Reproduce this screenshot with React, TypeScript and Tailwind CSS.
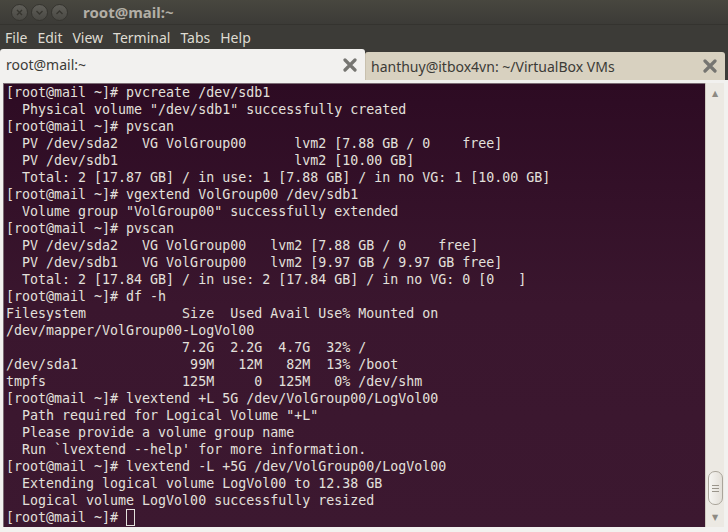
import { FunctionalComponent } from "react";

const lines: string[] = [
  "[root@mail ~]# pvcreate /dev/sdb1",
  "  Physical volume \"/dev/sdb1\" successfully created",
  "[root@mail ~]# pvscan",
  "  PV /dev/sda2   VG VolGroup00      lvm2 [7.88 GB / 0    free]",
  "  PV /dev/sdb1                      lvm2 [10.00 GB]",
  "  Total: 2 [17.87 GB] / in use: 1 [7.88 GB] / in no VG: 1 [10.00 GB]",
  "[root@mail ~]# vgextend VolGroup00 /dev/sdb1",
  "  Volume group \"VolGroup00\" successfully extended",
  "[root@mail ~]# pvscan",
  "  PV /dev/sda2   VG VolGroup00   lvm2 [7.88 GB / 0    free]",
  "  PV /dev/sdb1   VG VolGroup00   lvm2 [9.97 GB / 9.97 GB free]",
  "  Total: 2 [17.84 GB] / in use: 2 [17.84 GB] / in no VG: 0 [0   ]",
  "[root@mail ~]# df -h",
  "Filesystem            Size  Used Avail Use% Mounted on",
  "/dev/mapper/VolGroup00-LogVol00",
  "                      7.2G  2.2G  4.7G  32% /",
  "/dev/sda1              99M   12M   82M  13% /boot",
  "tmpfs                 125M     0  125M   0% /dev/shm",
  "[root@mail ~]# lvextend +L 5G /dev/VolGroup00/LogVol00",
  "  Path required for Logical Volume \"+L\"",
  "  Please provide a volume group name",
  "  Run `lvextend --help' for more information.",
  "[root@mail ~]# lvextend -L +5G /dev/VolGroup00/LogVol00",
  "  Extending logical volume LogVol00 to 12.38 GB",
  "  Logical volume LogVol00 successfully resized",
];

const CloseX = () => (
  <svg width="14" height="14" viewBox="0 0 14 14">
    <path d="M2 2 L12 12 M12 2 L2 12" stroke="#767571" strokeWidth="3.2" strokeLinecap="round" />
  </svg>
);

const WinButton = ({ kind }: { kind: string }) => (
  <div className="w-[17px] h-[17px] rounded-full bg-gradient-to-b from-[#5f5e58] to-[#4a4944] border border-[#35342f] flex items-center justify-center">
    <svg width="9" height="9" viewBox="0 0 9 9">
      {kind === "close" && <path d="M2 2 L7 7 M7 2 L2 7" stroke="#36352f" strokeWidth="1.4" />}
      {kind === "min" && <path d="M1.5 3 L4.5 6 L7.5 3" stroke="#36352f" strokeWidth="1.4" fill="none" />}
      {kind === "max" && <path d="M1.5 6 L4.5 3 L7.5 6" stroke="#36352f" strokeWidth="1.4" fill="none" />}
    </svg>
  </div>
);

const App: FunctionalComponent = () => {
  return (
    <div className="w-[728px] h-[532px] bg-[#3c3b37] flex flex-col overflow-hidden" style={{ fontFamily: '"Noto Sans", "DejaVu Sans", sans-serif' }}>
      {/* title bar */}
      <div className="h-[25px] flex items-center bg-gradient-to-b from-[#48473f] to-[#3c3b37] border-b border-[#34332f]">
        <div className="flex gap-[3px] pl-[11px]">
          <WinButton kind="close" />
          <WinButton kind="min" />
          <WinButton kind="max" />
        </div>
        <div className="ml-[15px] text-[15px] font-bold text-[#b2aea5] leading-none">root@mail:~</div>
      </div>

      {/* menu bar */}
      <div className="h-[24px] flex items-center pl-[5px] gap-[10px] text-[14px] text-[#dfdbd2]">
        <span>File</span>
        <span>Edit</span>
        <span>View</span>
        <span>Terminal</span>
        <span>Tabs</span>
        <span>Help</span>
      </div>

      {/* tabs */}
      <div className="h-[31px] flex items-end">
        <div className="w-[365px] h-[31px] bg-[#f2f1ef] rounded-t-[3px] flex items-center justify-between pl-[6px] pr-[8px] text-[14px] text-[#3c3b37]">
          <span>root@mail:~</span>
          <CloseX />
        </div>
        <div className="w-[360px] h-[28px] bg-[#d8d1c0] rounded-t-[3px] flex items-center justify-between pl-[5px] pr-[8px] text-[14px] text-[#3c3b37] border-l border-[#c8c0ae]">
          <span>hanthuy@itbox4vn: ~/VirtualBox VMs</span>
          <CloseX />
        </div>
      </div>

      {/* terminal frame */}
      <div className="flex-1 bg-[#f2f1ef] pl-[3px] pt-[3px] pb-[5px] pr-[4px] flex">
        <div className="flex-1 bg-gradient-to-b from-[#2d0b23] via-[#3a162e] to-[#3c1830] pl-[2px] overflow-hidden border-l border-t border-[#7b6c74]">
          <pre className="text-[13.3px] leading-[17px] text-[#e3e0dc] m-0" style={{ fontFamily: '"DejaVu Sans Mono", monospace' }}>
            {lines.map((l, i) => (
              <div key={i} className="h-[17px] whitespace-pre">{l}</div>
            ))}
            <div className="h-[17px] whitespace-pre flex items-center">
              <span>[root@mail ~]# </span>
              <span className="inline-block w-[9px] h-[17px] border border-[#e3e0dc]" />
            </div>
          </pre>
        </div>
        {/* scrollbar */}
        <div className="w-[19px] bg-[#ece9e3] border-l border-[#cfcac0] flex flex-col items-center justify-between py-[6px]">
          <span className="text-[8px] text-[#8d8a83] leading-none">▲</span>
          <div className="flex-1" />
          <div className="w-[15px] h-[34px] rounded-[7px] bg-gradient-to-r from-[#f6f5f2] to-[#e3dfd8] border border-[#aaa59b] flex flex-col items-center justify-center gap-[2px] mb-[8px]">
            <div className="w-[7px] h-px bg-[#9a958b]" />
            <div className="w-[7px] h-px bg-[#9a958b]" />
            <div className="w-[7px] h-px bg-[#9a958b]" />
          </div>
          <span className="text-[8px] text-[#8d8a83] leading-none">▼</span>
        </div>
      </div>
    </div>
  );
};

export default App;
